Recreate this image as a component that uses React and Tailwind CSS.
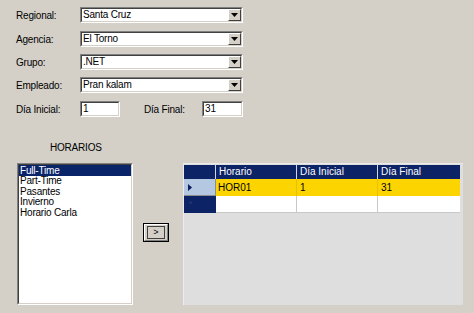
import React from 'react'

const font = { fontFamily: '"Liberation Sans", Arial, sans-serif' }

const Combo = ({ value }) => (
  <div className="w-[163px] h-[16px] flex bg-white border border-t-[#808080] border-l-[#808080] border-r-[#ffffff] border-b-[#ffffff]">
    <div className="flex-1 flex border border-t-[#404040] border-l-[#404040] border-r-[#d4d0c8] border-b-[#d4d0c8]">
      <div className="flex-1 pl-[1px] text-[10px] leading-[12px] tracking-[-0.2px] text-black truncate">{value}</div>
      <div className="w-[13px] h-full bg-[#d4d0c8] border border-t-[#ffffff] border-l-[#ffffff] border-r-[#404040] border-b-[#404040] flex items-center justify-center">
        <svg width="7" height="4" viewBox="0 0 7 4">
          <path d="M0 0h7L3.5 4z" fill="#000" />
        </svg>
      </div>
    </div>
  </div>
)

const TextBox = ({ value, w }) => (
  <div className={`${w} h-[16px] bg-white border border-t-[#808080] border-l-[#808080] border-r-[#ffffff] border-b-[#ffffff]`}>
    <div className="h-full border border-t-[#404040] border-l-[#404040] border-r-[#d4d0c8] border-b-[#d4d0c8] pl-[1px] text-[10px] leading-[12px] text-black">
      {value}
    </div>
  </div>
)

const FieldRow = ({ label, value, mt }) => (
  <div className={`flex items-center ${mt}`}>
    <div className="w-[64px] text-[10px] tracking-[-0.2px] text-black">{label}</div>
    <Combo value={value} />
  </div>
)

const horarios = ['Full-Time', 'Part-Time', 'Pasantes', 'Invierno', 'Horario Carla']

export default function App() {
  return (
    <div className="w-[474px] h-[313px] bg-[#d4d0c8] overflow-hidden" style={font}>
      <div className="pl-[16px] pt-[7px]">
        <FieldRow label="Regional:" value="Santa Cruz" mt="mt-0" />
        <FieldRow label="Agencia:" value="El Torno" mt="mt-[8px]" />
        <FieldRow label="Grupo:" value=".NET" mt="mt-[7px]" />
        <FieldRow label="Empleado:" value="Pran kalam" mt="mt-[7px]" />
        <div className="flex items-center mt-[8px]">
          <div className="w-[64px] text-[10px] tracking-[-0.2px] text-black">Día Inicial:</div>
          <TextBox value="1" w="w-[40px]" />
          <div className="ml-[24px] w-[58px] text-[10px] tracking-[-0.2px] text-black">Día Final:</div>
          <TextBox value="31" w="w-[41px]" />
        </div>
      </div>

      <div className="pl-[50px] mt-[25px] text-[10px] leading-[12px] tracking-[-0.2px] text-black">HORARIOS</div>

      <div className="flex mt-[9px] pl-[17px]">
        {/* list box */}
        <div className="w-[116px] h-[142px] bg-white border border-t-[#808080] border-l-[#808080] border-r-[#ffffff] border-b-[#ffffff]">
          <div className="h-full border border-t-[#404040] border-l-[#404040] border-r-[#d4d0c8] border-b-[#d4d0c8]">
            {horarios.map((h, i) => (
              <div
                key={h}
                className={`pl-[1px] text-[10px] tracking-[-0.2px] ${
                  i === 0 ? 'bg-[#0a246a] text-white h-[11px] leading-[11px]' : 'text-black leading-[10.5px]'
                }`}
              >
                {h}
              </div>
            ))}
          </div>
        </div>

        {/* move button */}
        <div className="ml-[10px] pt-[60px]">
          <div className="w-[26px] h-[19px] border border-black bg-[#d4d0c8]">
            <div className="h-full border border-t-[#ffffff] border-l-[#ffffff] border-r-[#808080] border-b-[#808080] px-[2px] py-[1px]">
              <div className="h-full border border-[#404040] flex items-center justify-center text-[9px] leading-none text-black">
                &gt;
              </div>
            </div>
          </div>
        </div>

        {/* grid */}
        <div className="ml-[14px] w-[280px] h-[142px] bg-[#dedede] border-t border-l border-[#ececec] pt-[1px]">
          <div className="flex w-[276px] h-[14px] bg-[#0c2366] text-white text-[10px] leading-[14px]">
            <div className="w-[32px] border-r border-[#cfd6e6]" />
            <div className="w-[81px] pl-[3px] border-r border-[#cfd6e6]">Horario</div>
            <div className="w-[81px] pl-[3px] border-r border-[#cfd6e6]">Día Inicial</div>
            <div className="w-[82px] pl-[3px]">Día Final</div>
          </div>
          <div className="flex w-[276px] h-[17px] text-[10px] leading-[17px] text-black">
            <div className="w-[32px] bg-[#b4c8e2] border-r border-b border-[#8c8c8c] flex items-center pl-[4px]">
              <svg width="4" height="7" viewBox="0 0 4 7">
                <path d="M0 0l4 3.5L0 7z" fill="#0a1a5c" />
              </svg>
            </div>
            <div className="w-[81px] bg-[#fcd500] pl-[2px] border-r border-[#e8c200]">HOR01</div>
            <div className="w-[81px] bg-[#fcd500] pl-[3px] border-r border-[#e8c200]">1</div>
            <div className="w-[82px] bg-[#fcd500] pl-[3px]">31</div>
          </div>
          <div className="flex w-[276px] h-[17px] text-[10px]">
            <div className="w-[32px] bg-[#0c2366] flex items-center pl-[5px] text-[9px] text-[#2a3f80] leading-none">*</div>
            <div className="w-[81px] bg-white border-r border-b border-[#c8c8c8]" />
            <div className="w-[81px] bg-white border-r border-b border-[#c8c8c8]" />
            <div className="w-[82px] bg-white border-b border-[#c8c8c8]" />
          </div>
        </div>
      </div>
    </div>
  )
}
